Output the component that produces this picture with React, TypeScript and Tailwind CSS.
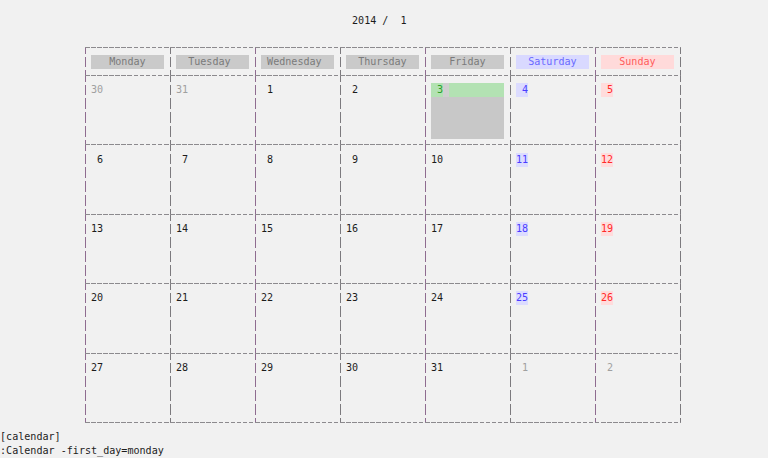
import React from "react";

type Day = {
  d: number;
  kind?: "out" | "sat" | "sun" | "today";
};

const headers = [
  { name: "Monday", bg: "bg-[#cacaca]", fg: "text-[#7a7a7a]" },
  { name: "Tuesday", bg: "bg-[#cacaca]", fg: "text-[#7a7a7a]" },
  { name: "Wednesday", bg: "bg-[#cacaca]", fg: "text-[#7a7a7a]" },
  { name: "Thursday", bg: "bg-[#cacaca]", fg: "text-[#7a7a7a]" },
  { name: "Friday", bg: "bg-[#cacaca]", fg: "text-[#7a7a7a]" },
  { name: "Saturday", bg: "bg-[#d9d9ff]", fg: "text-[#6a6aff]" },
  { name: "Sunday", bg: "bg-[#ffdada]", fg: "text-[#ff5c5c]" },
];

// calendar for January 2014, weeks start on monday
const weeks: Day[][] = [
  [{ d: 30, kind: "out" }, { d: 31, kind: "out" }, { d: 1 }, { d: 2 }, { d: 3, kind: "today" }, { d: 4, kind: "sat" }, { d: 5, kind: "sun" }],
  [{ d: 6 }, { d: 7 }, { d: 8 }, { d: 9 }, { d: 10 }, { d: 11, kind: "sat" }, { d: 12, kind: "sun" }],
  [{ d: 13 }, { d: 14 }, { d: 15 }, { d: 16 }, { d: 17 }, { d: 18, kind: "sat" }, { d: 19, kind: "sun" }],
  [{ d: 20 }, { d: 21 }, { d: 22 }, { d: 23 }, { d: 24 }, { d: 25, kind: "sat" }, { d: 26, kind: "sun" }],
  [{ d: 27 }, { d: 28 }, { d: 29 }, { d: 30 }, { d: 31 }, { d: 1, kind: "out" }, { d: 2, kind: "out" }],
];

function HLine() {
  return (
    <div className="h-px w-[596px] [background-image:repeating-linear-gradient(to_right,#8c8a8e_0_4.6px,transparent_4.6px_6.07px)]" />
  );
}

// vertical separators, every other one drawn in the purple tint
function VLine({ i }: { i: number }) {
  if (i % 2 === 0) {
    return (
      <div className="w-px shrink-0 self-stretch [background-image:repeating-linear-gradient(to_bottom,#8f6c90_0_5.6px,transparent_5.6px_8.6px,#8f6c90_8.6px_13.88px)]" />
    );
  }
  return (
    <div className="w-px shrink-0 self-stretch [background-image:repeating-linear-gradient(to_bottom,#7c7a7e_0_5.6px,transparent_5.6px_8.6px,#7c7a7e_8.6px_13.88px)]" />
  );
}

function DayNum({ day }: { day: Day }) {
  const text = String(day.d).padStart(2, " ");
  let cls = "text-[#1c1c1c]";
  if (day.kind === "out") cls = "text-[#a0a0a0]";
  if (day.kind === "sat") cls = "bg-[#dcdcff] text-[#4a3cff]";
  if (day.kind === "sun") cls = "bg-[#ffdcdc] text-[#ff2a2a]";
  return <span className={`h-[13.88px] w-[12.14px] whitespace-pre ${cls}`}>{text}</span>;
}

function Cell({ day }: { day: Day }) {
  if (day.kind === "today") {
    return (
      <div className="w-[84px] pl-[5px] pt-[7.3px]">
        <div className="h-[55.52px] w-[72.84px] bg-[#c8c8c8]">
          <div className="flex h-[13.88px]">
            <span className="w-[12.14px] whitespace-pre bg-[#b3e2b3] text-[#2b9e2b]">{" 3"}</span>
            <span className="w-[6.07px] bg-[#cfcfcf]" />
            <span className="flex-1 bg-[#b3e2b3]" />
          </div>
        </div>
      </div>
    );
  }
  return (
    <div className="flex w-[84px] items-start pl-[5px] pt-[7.3px]">
      <DayNum day={day} />
    </div>
  );
}

export default function App() {
  return (
    <div className="h-[458px] w-[768px] overflow-hidden bg-[#f1f1f1] font-['DejaVu_Sans_Mono',monospace] text-[10.08px] leading-[13.88px] text-[#1c1c1c]">
      <div className="h-[13.88px]" />
      <div className="h-[13.88px] whitespace-pre pl-[352px]">{"2014 /  1"}</div>
      <div className="h-[19.74px]" />

      <div className="ml-[85px] flex w-[596px] flex-col">
        <HLine />
        {/* weekday header */}
        <div className="flex h-[26.5px]">
          {headers.map((h, i) => (
            <React.Fragment key={h.name}>
              <VLine i={i} />
              <div className="flex w-[84px] items-center pl-[5px]">
                <span className={`h-[13.88px] w-[72.84px] whitespace-pre ${h.bg} ${h.fg}`}>
                  {" ".repeat(Math.floor((12 - h.name.length) / 2)) + h.name}
                </span>
              </div>
            </React.Fragment>
          ))}
          <VLine i={7} />
        </div>
        <HLine />

        {weeks.map((week, wi) => (
          <React.Fragment key={wi}>
            <div className="flex h-[68.4px]">
              {week.map((day, i) => (
                <React.Fragment key={i}>
                  <VLine i={i} />
                  <Cell day={day} />
                </React.Fragment>
              ))}
              <VLine i={7} />
            </div>
            <HLine />
          </React.Fragment>
        ))}
      </div>

      <div className="h-[7.3px]" />
      <div className="h-[13.88px] whitespace-pre">[calendar]</div>
      <div className="h-[13.88px] whitespace-pre">:Calendar -first_day=monday</div>
    </div>
  );
}
